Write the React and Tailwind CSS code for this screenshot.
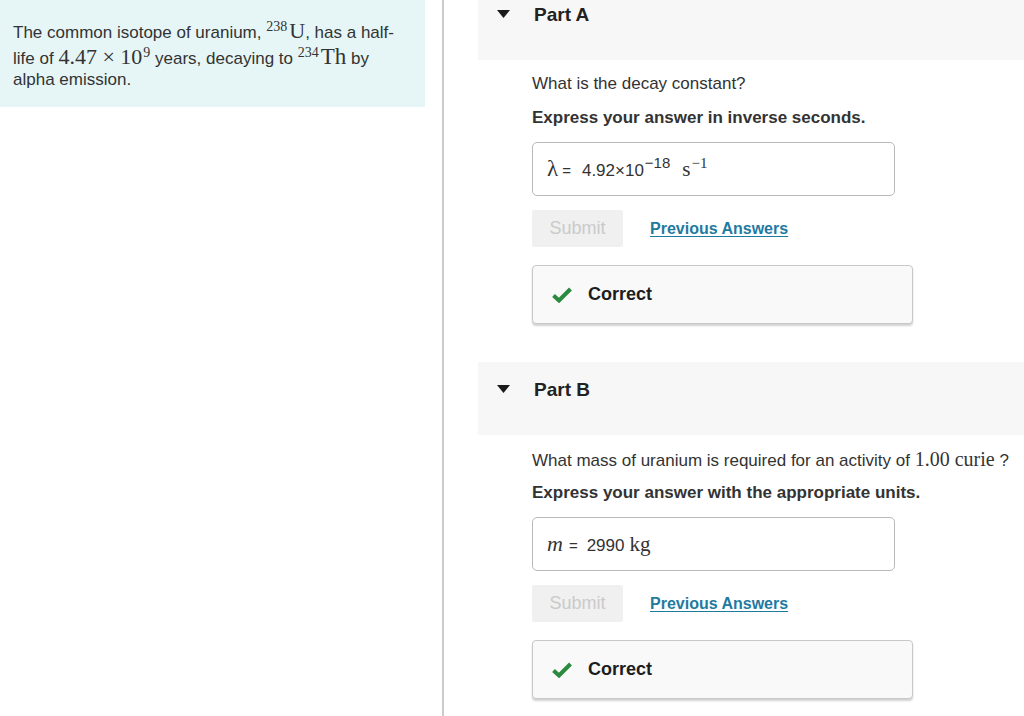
import React from "react";

const sans = { fontFamily: '"Liberation Sans", Arial, sans-serif' };
const serif = "font-['Liberation_Serif',serif]";

function Caret() {
  return (
    <svg width="13" height="8" viewBox="0 0 13 8" className="-mt-[3px] shrink-0">
      <path d="M0 0 L13 0 L6.5 8 Z" fill="#1a1a1a" />
    </svg>
  );
}

function Check() {
  return (
    <svg width="20" height="16" viewBox="0 0 20 16" className="shrink-0">
      <path d="M1.5 8.5 L7 13.5 L18.5 2" fill="none" stroke="#2a8a3e" strokeWidth="4" strokeLinejoin="miter" />
    </svg>
  );
}

function PartHeader({ label, className }) {
  return (
    <div className={`flex items-center bg-[#f7f7f7] pl-[19px] ${className}`}>
      <Caret />
      <span className="ml-[24px] text-[19px] font-bold text-[#222] leading-[22px]">{label}</span>
    </div>
  );
}

function AnswerBlock({ question, hint, answer }) {
  return (
    <div className="pl-[54px]">
      <p className="mt-[14px] h-[20px] text-[17px] leading-[20px] text-[#333]">{question}</p>
      <p className="mt-[14px] text-[17px] leading-[20px] font-bold text-[#333]">{hint}</p>
      <div className="mt-[14px] flex h-[54px] w-[363px] items-center rounded-[5px] border border-[#b9b9b9] bg-white px-[14px] text-[17px] text-[#333]">
        {answer}
      </div>
      <div className="mt-[14px] flex items-center">
        <div className="flex h-[37px] w-[91px] items-center justify-center rounded-[2px] bg-[#f0f0f0] text-[18px] text-[#cacaca]">
          Submit
        </div>
        <a className="ml-[27px] text-[16px] font-bold text-[#1f7aa0] underline underline-offset-2">
          Previous Answers
        </a>
      </div>
      <div className="mt-[18px] flex h-[59px] w-[381px] items-center rounded-[4px] border border-[#c8c8c8] bg-[#f9f9f9] pl-[19px] shadow-[0_2px_2px_rgba(0,0,0,0.18)]">
        <Check />
        <span className="ml-[16px] text-[18px] font-bold text-[#1d1d1d]">Correct</span>
      </div>
    </div>
  );
}

export default function App() {
  return (
    <div className="flex h-[716px] w-[1024px] overflow-hidden bg-white" style={sans}>
      <div className="w-[425px] shrink-0">
        <div className="h-[107px] bg-[#e6f6f7] px-[13px] pt-[20px] text-[17px] leading-[22px] text-[#333]">
          <div className="whitespace-nowrap">
            The common isotope of uranium,{" "}
            <span className={serif}>
              <sup className="text-[14px]">238</sup>
              <span className="ml-[2px] text-[22px]">U</span>
            </span>
            , has a half-
          </div>
          <div className="mt-[2px] whitespace-nowrap">
            life of{" "}
            <span className={`${serif} text-[22px]`}>
              4.47 × 10<sup className="ml-[1px] text-[14px]">9</sup>
            </span>{" "}
            years, decaying to{" "}
            <span className={serif}>
              <sup className="text-[14px]">234</sup>
              <span className="ml-[2px] text-[23px]">Th</span>
            </span>{" "}
            by
          </div>
          <div className="-mt-[1px]">alpha emission.</div>
        </div>
      </div>

      <div className="ml-[17px] flex-1 border-l-2 border-[#cbcbcb] pl-[34px]">
        <PartHeader label="Part A" className="h-[60px] pb-[30px]" />
        <AnswerBlock
          question="What is the decay constant?"
          hint="Express your answer in inverse seconds."
          answer={
            <span className="flex items-baseline">
              <span className={`${serif} text-[23px]`}>λ</span>
              <span className="ml-[4px] text-[15px]">=</span>
              <span className="ml-[11px]">
                4.92×10<sup className="ml-[1px] text-[15px]">−18</sup>
              </span>
              <span className={`${serif} ml-[12px] text-[21px]`}>
                s<sup className="ml-[1px] text-[15px]">−1</sup>
              </span>
            </span>
          }
        />

        <PartHeader label="Part B" className="mt-[38px] h-[73px] pb-[17px]" />
        <AnswerBlock
          question={
            <>
              What mass of uranium is required for an activity of{" "}
              <span className={`${serif} text-[20px] leading-none`}>1.00 curie</span> ?
            </>
          }
          hint="Express your answer with the appropriate units."
          answer={
            <span className="flex items-baseline">
              <span className={`${serif} italic text-[22px]`}>m</span>
              <span className="ml-[6px] text-[15px]">=</span>
              <span className="ml-[9px]">2990</span>
              <span className={`${serif} ml-[5px] text-[21px]`}>kg</span>
            </span>
          }
        />
      </div>
    </div>
  );
}
